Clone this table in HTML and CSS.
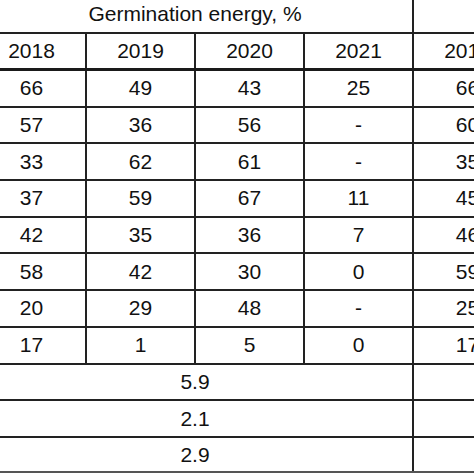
FILE: index.html
```html
<!DOCTYPE html>
<html>
<head>
<meta charset="utf-8">
<link rel="stylesheet" href="styles.css">
</head>
<body>
<div class="frame">
<table class="grid">
  <colgroup>
    <col class="c"><col class="c"><col class="c"><col class="c"><col class="c">
  </colgroup>
  <tr class="top">
    <td colspan="4">Germination energy, %</td>
    <td></td>
  </tr>
  <tr class="years">
    <td>2018</td><td>2019</td><td>2020</td><td>2021</td><td>2018</td>
  </tr>
  <tr class="row"><td>66</td><td>49</td><td>43</td><td>25</td><td>66</td></tr>
  <tr class="row"><td>57</td><td>36</td><td>56</td><td>-</td><td>60</td></tr>
  <tr class="row"><td>33</td><td>62</td><td>61</td><td>-</td><td>35</td></tr>
  <tr class="row"><td>37</td><td>59</td><td>67</td><td>11</td><td>45</td></tr>
  <tr class="row"><td>42</td><td>35</td><td>36</td><td>7</td><td>46</td></tr>
  <tr class="row"><td>58</td><td>42</td><td>30</td><td>0</td><td>59</td></tr>
  <tr class="row"><td>20</td><td>29</td><td>48</td><td>-</td><td>25</td></tr>
  <tr class="row"><td>17</td><td>1</td><td>5</td><td>0</td><td>17</td></tr>
  <tr class="row"><td colspan="4">5.9</td><td></td></tr>
  <tr class="row"><td colspan="4">2.1</td><td></td></tr>
  <tr class="row last"><td colspan="4">2.9</td><td></td></tr>
</table>
</div>
</body>
</html>
```

FILE: styles.css
```css
html, body {
  margin: 0;
  padding: 0;
  background: #ffffff;
}
.frame {
  width: 474px;
  height: 474px;
  overflow: hidden;
  position: relative;
}
.grid {
  border-collapse: collapse;
  table-layout: fixed;
  width: 545px;
  margin-left: -24px;
  margin-top: -4px;
  font-family: "Liberation Sans", Arial, sans-serif;
  font-size: 21px;
  color: #111111;
}
.c {
  width: 109px;
}
.grid td {
  border: 2px solid #222222;
  text-align: center;
  vertical-align: middle;
  padding: 0;
  line-height: 24px;
}
.top td {
  height: 36px;
  border-top: none;
}
.years td {
  height: 34px;
  border-bottom: 3px solid #1a1a1a;
}
.row td {
  height: 34.7px;
}
.last td {
  height: 33.5px;
  border-bottom: 2px solid #555555;
}
```
